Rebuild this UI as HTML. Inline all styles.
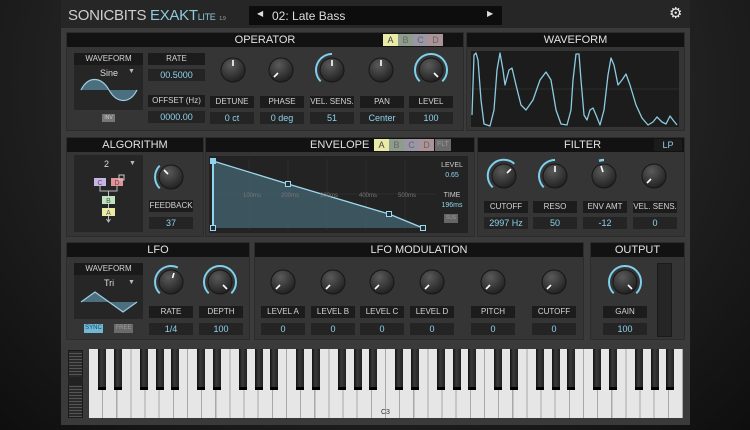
<!DOCTYPE html>
<html><head><meta charset="utf-8"><style>
*{margin:0;padding:0;box-sizing:border-box}
body{width:750px;height:430px;overflow:hidden;background:radial-gradient(ellipse at 50% 20%,#2e2e2e 0%,#232323 55%,#0e0e0e 100%);font-family:"Liberation Sans",sans-serif;position:relative}
.a{position:absolute}
.plug{left:61px;top:0;width:629px;height:425px;background:#3b3b3b}
.top{left:61px;top:0;width:629px;height:28px;background:#262626}
.pan{position:absolute;background:#353535;border:1px solid #2c2c2c}
.hd{position:absolute;background:#121212;color:#e2e2e2;font-size:11px;text-align:center;line-height:14px;height:14px}
.lb{position:absolute;background:#1c1c1c;color:#d4d4d4;font-size:8px;text-align:center;line-height:12px;height:12px;width:44px}
.vb{position:absolute;background:#242424;color:#8fd3ee;font-size:9px;text-align:center;line-height:12px;height:12px;width:44px}
.box{position:absolute;background:#262626}
.k{position:absolute;width:40px;height:40px}
.tab{position:absolute;top:34px;width:15px;height:12px;font-size:9px;text-align:center;line-height:12px;color:#666}
</style></head><body>
<svg width="0" height="0" style="position:absolute"><defs><radialGradient id="g" cx="40%" cy="30%" r="75%"><stop offset="0" stop-color="#5a5a5a"/><stop offset="1" stop-color="#1e1e1e"/></radialGradient></defs></svg>
<div class="a plug"></div>
<div class="a top"></div>
<div class="a" style="left:68px;top:7px;font-size:15px;color:#cfcfcf;letter-spacing:-0.3px">SONICBITS <span style="color:#8ccbdc">EXAKT</span><span style="font-size:9px;color:#8ccbdc">LITE</span> <span style="font-size:5px;color:#aaa">1.9</span></div>
<div class="a" style="left:249px;top:6px;width:253px;height:19px;background:#0d0d0d"></div>
<div class="a" style="left:257px;top:9px;font-size:8px;color:#ddd">◀</div>
<div class="a" style="left:272px;top:9px;font-size:12px;color:#ddd">02: Late Bass</div>
<div class="a" style="left:487px;top:9px;font-size:8px;color:#ddd">▶</div>
<div class="a" style="left:669px;top:6px;font-size:15px;color:#eee;line-height:16px">⚙</div>

<!-- OPERATOR -->
<div class="pan" style="left:66px;top:32px;width:398px;height:99px"></div>
<div class="hd" style="left:67px;top:33px;width:396px">OPERATOR</div>
<div class="tab" style="left:383px;background:#e9eba6;color:#444">A</div>
<div class="tab" style="left:398px;background:#8e9c8c">B</div>
<div class="tab" style="left:413px;background:#9a96a6">C</div>
<div class="tab" style="left:428px;background:#ab9398">D</div>
<div class="box" style="left:74px;top:53px;width:69px;height:57px"></div>
<div class="lb" style="left:74px;top:53px;width:69px;background:#1a1a1a">WAVEFORM</div>
<div class="a" style="left:100px;top:68px;font-size:9px;color:#ddd">Sine</div>
<div class="a" style="left:128px;top:68px;font-size:7px;color:#bbb">▼</div>
<svg class="a" style="left:80px;top:78px" width="58" height="24"><path d="M1,12 C8,-2 21,-2 29,12 C37,26 50,26 57,12 L57,12 L1,12Z" fill="#4c6f80"/><path d="M1,12 C8,-2 21,-2 29,12 C37,26 50,26 57,12" fill="none" stroke="#9fcfe0" stroke-width="1.2"/></svg>
<div class="a" style="left:102px;top:114px;width:13px;height:8px;background:#777;font-size:5px;color:#ccc;text-align:center;line-height:8px">INV</div>
<div class="lb" style="left:148px;top:53px;width:57px">RATE</div>
<div class="vb" style="left:148px;top:69px;width:57px">00.5000</div>
<div class="lb" style="left:148px;top:95px;width:57px">OFFSET (Hz)</div>
<div class="vb" style="left:148px;top:111px;width:57px">0000.00</div>
<div class="lb" style="left:210px;top:96px">DETUNE</div><div class="vb" style="left:210px;top:112px">0 ct</div>
<div class="lb" style="left:260px;top:96px">PHASE</div><div class="vb" style="left:260px;top:112px">0 deg</div>
<div class="lb" style="left:310px;top:96px">VEL. SENS.</div><div class="vb" style="left:310px;top:112px">51</div>
<div class="lb" style="left:360px;top:96px">PAN</div><div class="vb" style="left:360px;top:112px">Center</div>
<div class="lb" style="left:409px;top:96px">LEVEL</div><div class="vb" style="left:409px;top:112px">100</div>
<svg class="k" style="left:213px;top:50px"><circle cx="20" cy="20" r="12" fill="url(#g)" stroke="#161616"/><line x1="20" y1="16" x2="20" y2="10" stroke="#fff" stroke-width="1.6"/></svg>
<svg class="k" style="left:261px;top:50px"><circle cx="20" cy="20" r="12" fill="url(#g)" stroke="#161616"/><line x1="17" y1="23" x2="13" y2="27" stroke="#fff" stroke-width="1.6"/></svg>
<svg class="k" style="left:312px;top:50px"><path d="M8.7,31.3 A16,16 0 0 1 20,4" fill="none" stroke="#7fd0ec" stroke-width="2"/><circle cx="20" cy="20" r="12" fill="url(#g)" stroke="#161616"/><line x1="20" y1="16" x2="20" y2="10" stroke="#fff" stroke-width="1.6"/></svg>
<svg class="k" style="left:361px;top:50px"><circle cx="20" cy="20" r="12" fill="url(#g)" stroke="#161616"/><line x1="20" y1="16" x2="20" y2="10" stroke="#fff" stroke-width="1.6"/></svg>
<svg class="k" style="left:411px;top:50px"><path d="M8.7,31.3 A16,16 0 1 1 31.3,31.3" fill="none" stroke="#7fd0ec" stroke-width="2"/><circle cx="20" cy="20" r="12" fill="url(#g)" stroke="#161616"/><line x1="23" y1="23" x2="27" y2="27" stroke="#fff" stroke-width="1.6"/></svg>

<!-- WAVEFORM -->
<div class="pan" style="left:466px;top:32px;width:219px;height:99px"></div>
<div class="hd" style="left:467px;top:33px;width:217px">WAVEFORM</div>
<svg class="a" style="left:471px;top:51px" width="208" height="76"><rect width="208" height="76" fill="#1c1c1c"/><line x1="0" y1="38" x2="208" y2="38" stroke="#2c2c2c"/>
<polyline transform="translate(-471,-51)" fill="none" stroke="#8ccbe0" stroke-width="1.3" stroke-linejoin="round" points="472,115 474,55 476,53 478,60 481,100 484,124 490,126 494,110 497,70 500,53 503,70 505,85 509,70 512,68 516,85 521,105 526,110 533,100 540,80 546,72 551,80 556,110 561,124 567,125 571,110 573,80 576,54 579,54 581,80 584,115 587,120 590,110 593,108 596,115 600,125 604,110 608,75 611,58 614,65 618,85 622,80 626,74 630,85 636,105 642,118 648,125 653,122 657,117 662,122 666,124 670,116 673,120 677,125"/></svg>

<!-- ALGORITHM -->
<div class="pan" style="left:66px;top:137px;width:138px;height:100px"></div>
<div class="hd" style="left:67px;top:138px;width:136px">ALGORITHM</div>
<div class="box" style="left:74px;top:155px;width:69px;height:77px"></div>
<div class="a" style="left:104px;top:159px;font-size:9px;color:#ddd">2</div>
<div class="a" style="left:129px;top:160px;font-size:7px;color:#bbb">▼</div>
<svg class="a" style="left:90px;top:174px" width="40" height="50"><path d="M10,12 V17 H27 V12 M18.5,17 V22 M18.5,30 V34 M18.5,42 V48 M16.5,45 L18.5,48 L20.5,45" fill="none" stroke="#bbb" stroke-width="1"/><rect x="4" y="4" width="12" height="8" fill="#c9b4e6"/><rect x="21" y="4" width="12" height="8" fill="#e5919a"/><rect x="29" y="1" width="5" height="5" fill="none" stroke="#ccc"/><rect x="12" y="22" width="13" height="8" fill="#bfe3bf"/><rect x="12" y="34" width="13" height="8" fill="#ebeba6"/><text x="10" y="11" font-size="7" text-anchor="middle" fill="#555" font-family="Liberation Sans">C</text><text x="27" y="11" font-size="7" text-anchor="middle" fill="#555" font-family="Liberation Sans">D</text><text x="18.5" y="29" font-size="7" text-anchor="middle" fill="#555" font-family="Liberation Sans">B</text><text x="18.5" y="41" font-size="7" text-anchor="middle" fill="#555" font-family="Liberation Sans">A</text></svg>
<svg class="k" style="left:151px;top:157px"><path d="M8.7,31.3 A16,16 0 0 1 8.7,8.7" fill="none" stroke="#7fd0ec" stroke-width="2"/><circle cx="20" cy="20" r="12" fill="url(#g)" stroke="#161616"/><line x1="17" y1="17" x2="13" y2="13" stroke="#fff" stroke-width="1.6"/></svg>
<div class="lb" style="left:149px;top:200px;width:44px">FEEDBACK</div>
<div class="vb" style="left:149px;top:217px">37</div>

<!-- ENVELOPE -->
<div class="pan" style="left:205px;top:137px;width:270px;height:100px"></div>
<div class="hd" style="left:206px;top:138px;width:268px;text-align:left;padding-left:104px">ENVELOPE</div>
<div class="tab" style="top:139px;left:374px;background:#e9eba6;color:#444">A</div>
<div class="tab" style="top:139px;left:389px;background:#8e9c8c">B</div>
<div class="tab" style="top:139px;left:404px;background:#9a96a6">C</div>
<div class="tab" style="top:139px;left:419px;background:#ab9398">D</div>
<div class="tab" style="top:139px;left:435px;background:#6a6a6a;color:#999;width:16px;font-size:7px">FLT</div>
<div class="box" style="left:209px;top:156px;width:259px;height:77px;background:#232323"></div>
<svg class="a" style="left:209px;top:156px" width="230" height="77">
<g stroke="#2e2e2e"><line x1="40" y1="3" x2="40" y2="74"/><line x1="79" y1="3" x2="79" y2="74"/><line x1="118" y1="3" x2="118" y2="74"/><line x1="157" y1="3" x2="157" y2="74"/><line x1="196" y1="3" x2="196" y2="74"/><line x1="4" y1="38" x2="226" y2="38"/></g>
<path d="M4,5 L79,28 L180,58 L214,72 L4,72Z" fill="#3f5d69" opacity=".85"/>
<path d="M4,72 L4,5 L79,28 L180,58 L214,72" fill="none" stroke="#9fd8ee" stroke-width="1.3"/>
<line x1="4" y1="5" x2="4" y2="72" stroke="#8fd3ee" stroke-width="2"/>
<g font-size="6" fill="#777" font-family="Liberation Sans"><text x="34" y="41">100ms</text><text x="72" y="41">200ms</text><text x="111" y="41">300ms</text><text x="150" y="41">400ms</text><text x="189" y="41">500ms</text></g>
<rect x="1" y="2" width="6" height="6" fill="#8fd3ee"/>
<g fill="#1e2e34" stroke="#9fd8ee"><rect x="76.5" y="25.5" width="5" height="5"/><rect x="177.5" y="55.5" width="5" height="5"/><rect x="211.5" y="69.5" width="5" height="5"/><rect x="1.5" y="69.5" width="5" height="5"/></g></svg>
<div class="a" style="left:438px;top:161px;width:28px;text-align:center;font-size:7px;color:#ccc;line-height:10px">LEVEL<br><span style="color:#8fd3ee">0.65</span><br><br>TIME<br><span style="color:#8fd3ee">196ms</span></div>
<div class="a" style="left:444px;top:214px;width:14px;height:9px;background:#666;font-size:5px;color:#999;text-align:center;line-height:9px">SUS</div>

<!-- FILTER -->
<div class="pan" style="left:477px;top:137px;width:208px;height:100px"></div>
<div class="hd" style="left:478px;top:138px;width:206px;text-align:left;padding-left:86px">FILTER</div>
<div class="a" style="left:654px;top:139px;width:28px;height:12px;background:#1b1b1b;color:#8fd3ee;font-size:9px;text-align:center;line-height:12px">LP</div>
<svg class="k" style="left:484px;top:156px"><path d="M8.7,31.3 A16,16 0 0 1 30.3,7.7" fill="none" stroke="#7fd0ec" stroke-width="2"/><circle cx="20" cy="20" r="12" fill="url(#g)" stroke="#161616"/><line x1="23" y1="17" x2="27" y2="13" stroke="#fff" stroke-width="1.6"/></svg>
<svg class="k" style="left:535px;top:156px"><path d="M8.7,31.3 A16,16 0 0 1 20,4" fill="none" stroke="#7fd0ec" stroke-width="2"/><circle cx="20" cy="20" r="12" fill="url(#g)" stroke="#161616"/><line x1="20" y1="16" x2="20" y2="10" stroke="#fff" stroke-width="1.6"/></svg>
<svg class="k" style="left:584px;top:156px"><path d="M15,4.8 A16,16 0 0 1 20,4" fill="none" stroke="#7fd0ec" stroke-width="2.5"/><circle cx="20" cy="20" r="12" fill="url(#g)" stroke="#161616"/><line x1="19" y1="16" x2="17" y2="10" stroke="#fff" stroke-width="1.6"/></svg>
<svg class="k" style="left:634px;top:156px"><circle cx="20" cy="20" r="12" fill="url(#g)" stroke="#161616"/><line x1="17" y1="23" x2="13" y2="27" stroke="#fff" stroke-width="1.6"/></svg>
<div class="lb" style="left:484px;top:201px">CUTOFF</div><div class="vb" style="left:484px;top:217px">2997 Hz</div>
<div class="lb" style="left:533px;top:201px">RESO</div><div class="vb" style="left:533px;top:217px">50</div>
<div class="lb" style="left:583px;top:201px">ENV AMT</div><div class="vb" style="left:583px;top:217px">-12</div>
<div class="lb" style="left:633px;top:201px">VEL. SENS.</div><div class="vb" style="left:633px;top:217px">0</div>

<!-- LFO -->
<div class="pan" style="left:66px;top:242px;width:184px;height:98px"></div>
<div class="hd" style="left:67px;top:243px;width:182px">LFO</div>
<div class="box" style="left:74px;top:263px;width:69px;height:56px"></div>
<div class="lb" style="left:74px;top:263px;width:69px;background:#1a1a1a">WAVEFORM</div>
<div class="a" style="left:104px;top:278px;font-size:9px;color:#ddd">Tri</div>
<div class="a" style="left:128px;top:279px;font-size:7px;color:#bbb">▼</div>
<svg class="a" style="left:80px;top:290px" width="58" height="24"><path d="M1,12 L15,2 L43,22 L57,12Z" fill="#4c6f80"/><path d="M1,12 L15,2 L43,22 L57,12" fill="none" stroke="#9fcfe0" stroke-width="1.2"/></svg>
<div class="a" style="left:84px;top:324px;width:19px;height:9px;background:#6fb9d6;font-size:6px;color:#1d4b5e;text-align:center;line-height:9px">SYNC</div>
<div class="a" style="left:114px;top:324px;width:19px;height:9px;background:#6a6a6a;font-size:6px;color:#999;text-align:center;line-height:9px">FREE</div>
<svg class="k" style="left:151px;top:262px"><path d="M8.7,31.3 A16,16 0 0 1 26.8,5.5" fill="none" stroke="#7fd0ec" stroke-width="2"/><circle cx="20" cy="20" r="12" fill="url(#g)" stroke="#161616"/><line x1="21.5" y1="16" x2="23" y2="11" stroke="#fff" stroke-width="1.6"/></svg>
<svg class="k" style="left:200px;top:262px"><path d="M8.7,31.3 A16,16 0 1 1 31.3,31.3" fill="none" stroke="#7fd0ec" stroke-width="2"/><circle cx="20" cy="20" r="12" fill="url(#g)" stroke="#161616"/><line x1="23" y1="23" x2="27" y2="27" stroke="#fff" stroke-width="1.6"/></svg>
<div class="lb" style="left:149px;top:306px">RATE</div><div class="vb" style="left:149px;top:323px">1/4</div>
<div class="lb" style="left:199px;top:306px">DEPTH</div><div class="vb" style="left:199px;top:323px">100</div>

<!-- LFO MOD -->
<div class="pan" style="left:254px;top:242px;width:330px;height:98px"></div>
<div class="hd" style="left:255px;top:243px;width:328px">LFO MODULATION</div>
<svg class="k" style="left:263px;top:262px"><circle cx="20" cy="20" r="12" fill="url(#g)" stroke="#161616"/><line x1="17" y1="23" x2="13" y2="27" stroke="#fff" stroke-width="1.6"/></svg>
<svg class="k" style="left:313px;top:262px"><circle cx="20" cy="20" r="12" fill="url(#g)" stroke="#161616"/><line x1="17" y1="23" x2="13" y2="27" stroke="#fff" stroke-width="1.6"/></svg>
<svg class="k" style="left:362px;top:262px"><circle cx="20" cy="20" r="12" fill="url(#g)" stroke="#161616"/><line x1="17" y1="23" x2="13" y2="27" stroke="#fff" stroke-width="1.6"/></svg>
<svg class="k" style="left:412px;top:262px"><circle cx="20" cy="20" r="12" fill="url(#g)" stroke="#161616"/><line x1="17" y1="23" x2="13" y2="27" stroke="#fff" stroke-width="1.6"/></svg>
<svg class="k" style="left:473px;top:262px"><circle cx="20" cy="20" r="12" fill="url(#g)" stroke="#161616"/><line x1="17" y1="23" x2="13" y2="27" stroke="#fff" stroke-width="1.6"/></svg>
<svg class="k" style="left:534px;top:262px"><circle cx="20" cy="20" r="12" fill="url(#g)" stroke="#161616"/><line x1="17" y1="23" x2="13" y2="27" stroke="#fff" stroke-width="1.6"/></svg>
<div class="lb" style="left:261px;top:306px">LEVEL A</div><div class="vb" style="left:261px;top:323px">0</div>
<div class="lb" style="left:311px;top:306px">LEVEL B</div><div class="vb" style="left:311px;top:323px">0</div>
<div class="lb" style="left:360px;top:306px">LEVEL C</div><div class="vb" style="left:360px;top:323px">0</div>
<div class="lb" style="left:410px;top:306px">LEVEL D</div><div class="vb" style="left:410px;top:323px">0</div>
<div class="lb" style="left:471px;top:306px">PITCH</div><div class="vb" style="left:471px;top:323px">0</div>
<div class="lb" style="left:532px;top:306px">CUTOFF</div><div class="vb" style="left:532px;top:323px">0</div>

<!-- OUTPUT -->
<div class="pan" style="left:590px;top:242px;width:95px;height:98px"></div>
<div class="hd" style="left:591px;top:243px;width:93px">OUTPUT</div>
<svg class="k" style="left:605px;top:262px"><path d="M8.7,31.3 A16,16 0 1 1 31.3,31.3" fill="none" stroke="#7fd0ec" stroke-width="2"/><circle cx="20" cy="20" r="12" fill="url(#g)" stroke="#161616"/><line x1="23" y1="23" x2="27" y2="27" stroke="#fff" stroke-width="1.6"/></svg>
<div class="lb" style="left:603px;top:306px">GAIN</div><div class="vb" style="left:603px;top:323px">100</div>
<div class="a" style="left:657px;top:263px;width:15px;height:74px;background:#252525;border:1px solid #1a1a1a"></div>

<!-- KEYBOARD -->
<div class="a" style="left:61px;top:343px;width:629px;height:82px;background:#3a3a3a"></div>
<div class="a" style="left:68px;top:350px;width:15px;height:68px;background:repeating-linear-gradient(#2a2a2a 0 2px,#555 2px 3px);border:1px solid #1a1a1a"></div>
<div class="a" style="left:68px;top:377px;width:15px;height:8px;background:#222"></div>
<div class="a" style="left:89px;top:349px;width:594px;height:69px;background:repeating-linear-gradient(90deg,#e6e6e6 0 13.1px,#a8a8a8 13.1px 14.143px)"></div>
<div id="bk"></div>
<div class="a" style="left:381px;top:409px;font-size:7px;color:#333">C3</div>
<script>
var h='',w=594/42,off=[0.62,1.78,3.6,4.72,5.82];
for(var o=0;o<6;o++)for(var i=0;i<5;i++){var x=89+(o*7+off[i])*w;h+='<div class="a" style="left:'+x.toFixed(1)+'px;top:349px;width:8px;height:41px;background:linear-gradient(90deg,#111,#3a3a3a 40%,#222);border-bottom:3px solid #000"></div>';}
document.getElementById('bk').innerHTML=h;
</script>
</body></html>
